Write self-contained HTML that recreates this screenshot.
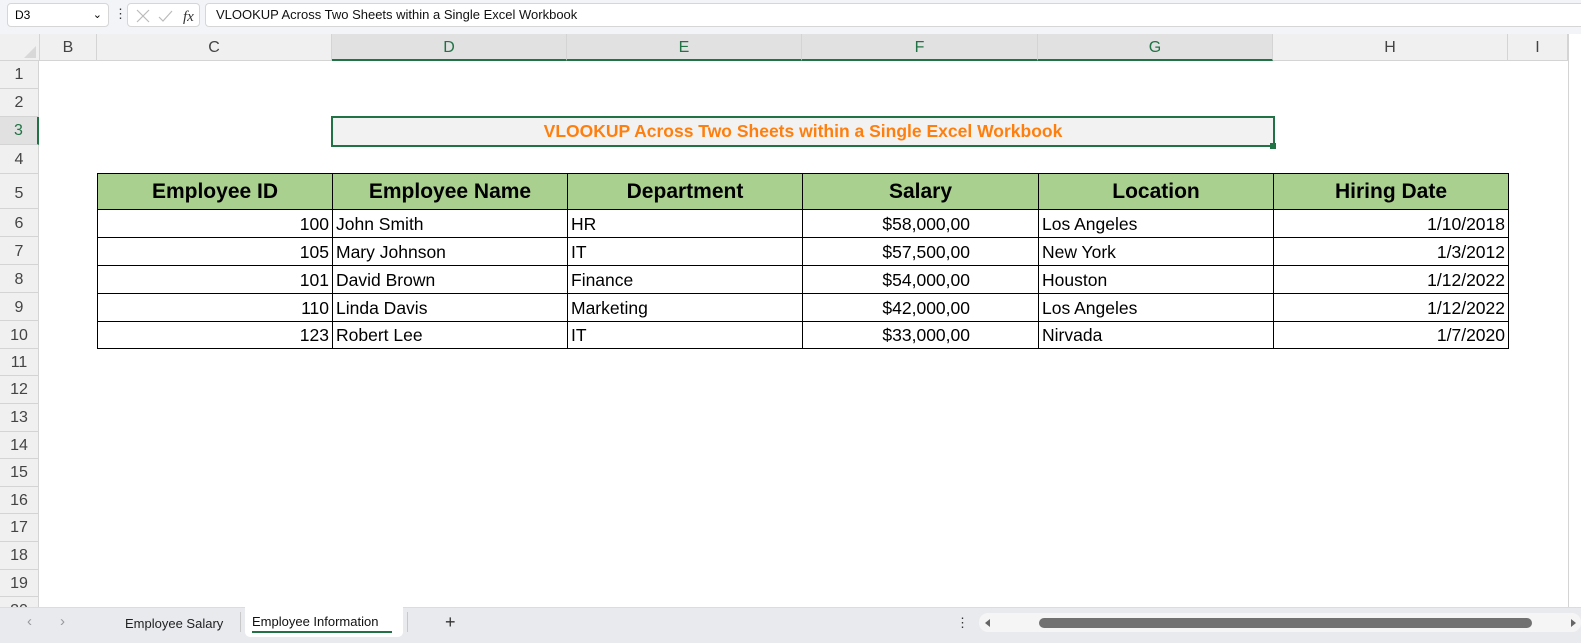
<!DOCTYPE html>
<html><head><meta charset="utf-8"><style>
*{margin:0;padding:0;box-sizing:border-box}
body{width:1581px;height:643px;overflow:hidden;background:#fff;font-family:"Liberation Sans",sans-serif;position:relative}
.a{position:absolute}
.ch{position:absolute;top:34px;height:27px;background:#f0f0f0;border-right:1px solid #d4d4d4;border-bottom:1px solid #d4d4d4;text-align:center;font-size:16px;line-height:27px;color:#444}
.rh{position:absolute;left:0;width:39px;background:#f0f0f0;border-right:1px solid #d4d4d4;border-bottom:1px solid #d4d4d4;text-align:center;font-size:16px;color:#444}
.c{position:absolute;border:1px solid #000;font-size:17.5px;white-space:nowrap;overflow:hidden;padding:0 3px;color:#000}
.h{background:#a9d08e;font-weight:bold;font-size:21px;text-align:center}
.r{text-align:right}
</style></head><body>
<div class="a" style="left:0;top:0;width:1581px;height:34px;background:#f2f4f7"></div>
<div class="a" style="left:7px;top:3px;width:102px;height:24px;background:#fff;border:1px solid #d6d6d6;border-radius:4px;font-size:12px;line-height:22px;padding-left:7px">D3<span style="position:absolute;right:6px;top:0;font-size:11px">&#8964;</span></div>
<div class="a" style="left:114px;top:6px;font-size:13px;color:#333">&#8942;</div>
<div class="a" style="left:127px;top:3px;width:73px;height:24px;background:#fff;border:1px solid #d6d6d6;border-radius:4px">
<svg width="73" height="24" style="position:absolute;left:0;top:0"><path d="M9 6l12 12M21 6L9 18" stroke="#bbb" stroke-width="1.2" fill="none"/><path d="M31 13l4 4 9-10" stroke="#bbb" stroke-width="1.2" fill="none"/><text x="55" y="17" font-family="Liberation Serif" font-style="italic" font-size="15" fill="#333">fx</text></svg></div>
<div class="a" style="left:205px;top:3px;width:1376px;height:24px;background:#fff;border:1px solid #d6d6d6;border-right:none;border-radius:4px 0 0 4px;font-size:13px;line-height:22px;padding-left:10px;color:#111">VLOOKUP Across Two Sheets within a Single Excel Workbook</div>
<div class="ch" style="left:0;width:40px"><svg width="40" height="27" style="position:absolute;left:0;top:0"><path d="M24 24L36 12V24Z" fill="#d8d8d8"/></svg></div>
<div class="ch" style="left:40px;width:57px">B</div>
<div class="ch" style="left:97px;width:235px">C</div>
<div class="ch" style="left:332px;width:235px;background:#e1e1e1;color:#217346;border-bottom:2px solid #217346">D</div>
<div class="ch" style="left:567px;width:235px;background:#e1e1e1;color:#217346;border-bottom:2px solid #217346">E</div>
<div class="ch" style="left:802px;width:236px;background:#e1e1e1;color:#217346;border-bottom:2px solid #217346">F</div>
<div class="ch" style="left:1038px;width:235px;background:#e1e1e1;color:#217346;border-bottom:2px solid #217346">G</div>
<div class="ch" style="left:1273px;width:235px">H</div>
<div class="ch" style="left:1508px;width:60px">I</div>
<div class="a" style="left:1568px;top:34px;width:13px;height:573px;background:#fff;border-left:1px solid #d4d4d4"></div>
<div class="rh" style="top:61px;height:28px;line-height:28px">1</div>
<div class="rh" style="top:89px;height:28px;line-height:28px">2</div>
<div class="rh" style="top:117px;height:28px;line-height:28px;background:#e1e1e1;color:#217346;border-right:2px solid #217346">3</div>
<div class="rh" style="top:145px;height:29px;line-height:29px">4</div>
<div class="rh" style="top:174px;height:35px;line-height:40px">5</div>
<div class="rh" style="top:209px;height:28px;line-height:30px">6</div>
<div class="rh" style="top:237px;height:28px;line-height:30px">7</div>
<div class="rh" style="top:265px;height:28px;line-height:30px">8</div>
<div class="rh" style="top:293px;height:28px;line-height:30px">9</div>
<div class="rh" style="top:321px;height:28px;line-height:30px">10</div>
<div class="rh" style="top:349px;height:27px;line-height:27px">11</div>
<div class="rh" style="top:376px;height:28px;line-height:28px">12</div>
<div class="rh" style="top:404px;height:28px;line-height:28px">13</div>
<div class="rh" style="top:432px;height:27px;line-height:27px">14</div>
<div class="rh" style="top:459px;height:28px;line-height:28px">15</div>
<div class="rh" style="top:487px;height:27px;line-height:27px">16</div>
<div class="rh" style="top:514px;height:28px;line-height:28px">17</div>
<div class="rh" style="top:542px;height:28px;line-height:28px">18</div>
<div class="rh" style="top:570px;height:27px;line-height:27px">19</div>
<div class="rh" style="top:597px;height:20px;line-height:28px">20</div>
<div class="a" style="left:331px;top:116px;width:944px;height:31px;background:#f2f2f2;border:2px solid #217346;color:#ff7f0e;font-weight:bold;font-size:17.5px;text-align:center;line-height:27px">VLOOKUP Across Two Sheets within a Single Excel Workbook</div>
<div class="a" style="left:1270px;top:143px;width:6px;height:6px;background:#217346"></div>
<div class="c h" style="left:97px;top:173px;width:236px;height:37px;line-height:35px">Employee ID</div>
<div class="c h" style="left:332px;top:173px;width:236px;height:37px;line-height:35px">Employee Name</div>
<div class="c h" style="left:567px;top:173px;width:236px;height:37px;line-height:35px">Department</div>
<div class="c h" style="left:802px;top:173px;width:237px;height:37px;line-height:35px">Salary</div>
<div class="c h" style="left:1038px;top:173px;width:236px;height:37px;line-height:35px">Location</div>
<div class="c h" style="left:1273px;top:173px;width:236px;height:37px;line-height:35px">Hiring Date</div>

<div class="c r" style="left:97px;top:209px;width:236px;height:29px;line-height:28px">100</div>
<div class="c" style="left:332px;top:209px;width:236px;height:29px;line-height:28px">John Smith</div>
<div class="c" style="left:567px;top:209px;width:236px;height:29px;line-height:28px">HR</div>
<div class="c r" style="left:802px;top:209px;width:237px;height:29px;line-height:28px;padding-right:68px">$58,000,00</div>
<div class="c" style="left:1038px;top:209px;width:236px;height:29px;line-height:28px">Los Angeles</div>
<div class="c r" style="left:1273px;top:209px;width:236px;height:29px;line-height:28px">1/10/2018</div>

<div class="c r" style="left:97px;top:237px;width:236px;height:29px;line-height:28px">105</div>
<div class="c" style="left:332px;top:237px;width:236px;height:29px;line-height:28px">Mary Johnson</div>
<div class="c" style="left:567px;top:237px;width:236px;height:29px;line-height:28px">IT</div>
<div class="c r" style="left:802px;top:237px;width:237px;height:29px;line-height:28px;padding-right:68px">$57,500,00</div>
<div class="c" style="left:1038px;top:237px;width:236px;height:29px;line-height:28px">New York</div>
<div class="c r" style="left:1273px;top:237px;width:236px;height:29px;line-height:28px">1/3/2012</div>

<div class="c r" style="left:97px;top:265px;width:236px;height:29px;line-height:28px">101</div>
<div class="c" style="left:332px;top:265px;width:236px;height:29px;line-height:28px">David Brown</div>
<div class="c" style="left:567px;top:265px;width:236px;height:29px;line-height:28px">Finance</div>
<div class="c r" style="left:802px;top:265px;width:237px;height:29px;line-height:28px;padding-right:68px">$54,000,00</div>
<div class="c" style="left:1038px;top:265px;width:236px;height:29px;line-height:28px">Houston</div>
<div class="c r" style="left:1273px;top:265px;width:236px;height:29px;line-height:28px">1/12/2022</div>

<div class="c r" style="left:97px;top:293px;width:236px;height:29px;line-height:28px">110</div>
<div class="c" style="left:332px;top:293px;width:236px;height:29px;line-height:28px">Linda Davis</div>
<div class="c" style="left:567px;top:293px;width:236px;height:29px;line-height:28px">Marketing</div>
<div class="c r" style="left:802px;top:293px;width:237px;height:29px;line-height:28px;padding-right:68px">$42,000,00</div>
<div class="c" style="left:1038px;top:293px;width:236px;height:29px;line-height:28px">Los Angeles</div>
<div class="c r" style="left:1273px;top:293px;width:236px;height:29px;line-height:28px">1/12/2022</div>

<div class="c r" style="left:97px;top:321px;width:236px;height:28px;line-height:27px">123</div>
<div class="c" style="left:332px;top:321px;width:236px;height:28px;line-height:27px">Robert Lee</div>
<div class="c" style="left:567px;top:321px;width:236px;height:28px;line-height:27px">IT</div>
<div class="c r" style="left:802px;top:321px;width:237px;height:28px;line-height:27px;padding-right:68px">$33,000,00</div>
<div class="c" style="left:1038px;top:321px;width:236px;height:28px;line-height:27px">Nirvada</div>
<div class="c r" style="left:1273px;top:321px;width:236px;height:28px;line-height:27px">1/7/2020</div>

<div class="a" style="left:0;top:607px;width:1581px;height:36px;background:#e8eaee;border-top:1px solid #dcdcdc"></div>
<div class="a" style="left:27px;top:613px;font-size:15px;color:#999">&#8249;</div>
<div class="a" style="left:60px;top:613px;font-size:15px;color:#999">&#8250;</div>
<div class="a" style="left:125px;top:616px;font-size:13px;color:#222">Employee Salary</div>
<div class="a" style="left:240px;top:612px;width:1px;height:20px;background:#c8c8c8"></div>
<div class="a" style="left:245px;top:607px;width:158px;height:30px;background:#fff;border-radius:0 0 5px 5px"></div>
<div class="a" style="left:252px;top:614px;font-size:13px;color:#111">Employee Information</div>
<div class="a" style="left:252px;top:631px;width:140px;height:2px;background:#217346"></div>
<div class="a" style="left:407px;top:612px;width:1px;height:20px;background:#c8c8c8"></div>
<div class="a" style="left:445px;top:612px;font-size:18px;color:#333">+</div>
<div class="a" style="left:956px;top:615px;font-size:13px;color:#333">&#8942;</div>
<div class="a" style="left:979px;top:613px;width:602px;height:19px;background:#f5f5f5;border-radius:9px"></div>
<div class="a" style="left:1039px;top:618px;width:493px;height:10px;background:#717171;border-radius:5px"></div>
<svg class="a" style="left:983px;top:617px" width="10" height="12"><path d="M2 6L7 2V10Z" fill="#666"/></svg>
<svg class="a" style="left:1568px;top:617px" width="10" height="12"><path d="M8 6L3 2V10Z" fill="#666"/></svg>
</body></html>
